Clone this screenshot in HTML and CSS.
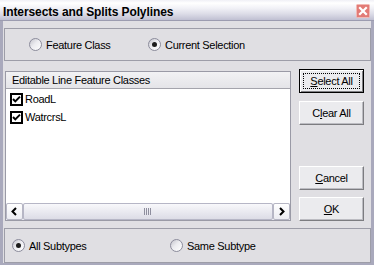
FILE: index.html
```html
<!DOCTYPE html>
<html>
<head>
<meta charset="utf-8">
<title>Intersects and Splits Polylines</title>
<link rel="stylesheet" href="styles.css">
</head>
<body>
<div class="window">
  <div class="titlebar">
    <span class="title">Intersects and Splits Polylines</span>
    <span class="close">
      <svg width="14" height="14" viewBox="0 0 14 14">
        <rect x="0.5" y="0.5" width="13" height="13" rx="1" fill="#e27b76" stroke="#f2b9b5"/>
        <path d="M4 4 L10 10 M10 4 L4 10" stroke="#fff" stroke-width="2.2" stroke-linecap="square"/>
      </svg>
    </span>
  </div>
  <div class="client">
    <div class="group group-top">
      <label class="opt"><span class="radio"></span>Feature Class</label>
      <label class="opt"><span class="radio on"></span>Current Selection</label>
    </div>
    <div class="middle">
      <div class="list">
        <div class="list-header">Editable Line Feature Classes</div>
        <div class="list-body">
          <div class="item">
            <span class="check"><svg width="9" height="9" viewBox="0 0 9 9"><path d="M1 4 L3.3 6.4 L8 1.6" fill="none" stroke="#000" stroke-width="2"/></svg></span>
            <span>RoadL</span>
          </div>
          <div class="item">
            <span class="check"><svg width="9" height="9" viewBox="0 0 9 9"><path d="M1 4 L3.3 6.4 L8 1.6" fill="none" stroke="#000" stroke-width="2"/></svg></span>
            <span>WatrcrsL</span>
          </div>
        </div>
        <div class="hscroll">
          <span class="sb-btn"><svg width="9" height="9" viewBox="0 0 9 9"><path d="M6 1 L2.5 4.5 L6 8" fill="none" stroke="#000" stroke-width="2"/></svg></span>
          <span class="sb-thumb"><span class="grip"></span></span>
          <span class="sb-btn"><svg width="9" height="9" viewBox="0 0 9 9"><path d="M3 1 L6.5 4.5 L3 8" fill="none" stroke="#000" stroke-width="2"/></svg></span>
        </div>
      </div>
      <div class="buttons">
        <button class="btn btn-default"><u>S</u>elect All</button>
        <button class="btn btn-gap">C<u>l</u>ear All</button>
        <span class="spacer"></span>
        <button class="btn"><u>C</u>ancel</button>
        <button class="btn btn-gap2"><u>O</u>K</button>
      </div>
    </div>
    <div class="group group-bottom">
      <label class="opt"><span class="radio on"></span>All Subtypes</label>
      <label class="opt"><span class="radio"></span>Same Subtype</label>
    </div>
  </div>
</div>
</body>
</html>
```

FILE: styles.css
```css
html, body {
  margin: 0;
  padding: 0;
  background: #e0dfe3;
}

.window {
  width: 374px;
  height: 265px;
  display: flex;
  flex-direction: column;
  font-family: "Liberation Sans", Arial, sans-serif;
  font-size: 11px;
  letter-spacing: -0.3px;
  color: #000;
  overflow: hidden;
}

.titlebar {
  height: 20px;
  flex: none;
  border-bottom: 1px solid #9c9cb0;
  display: flex;
  align-items: center;
  justify-content: space-between;
  padding: 0 4px 0 3px;
  background: linear-gradient(#f0f0f6 0, #ffffff 15%, #f2f2f7 40%, #dcdce7 70%, #c0c0d2 100%);
}

.title {
  font-weight: bold;
  font-size: 12px;
  letter-spacing: -0.1px;
  padding-top: 3px;
}

.close {
  display: flex;
  width: 14px;
  height: 14px;
  margin-top: 2px;
}

.client {
  flex: 1;
  background: #e0dfe3;
  border-style: solid;
  border-color: #a9a9bc;
  border-width: 0 3px 2px 3px;
  padding-top: 7px;
  display: flex;
  flex-direction: column;
}

.group {
  margin-left: 1px;
  width: 367px;
  box-sizing: border-box;
  border: 1px solid #9d9da8;
  display: flex;
  align-items: center;
  flex: none;
}

.group-top {
  height: 33px;
  padding-left: 24px;
}

.group-bottom {
  height: 35px;
  margin-top: 7px;
  padding-left: 7px;
}

.opt {
  display: flex;
  align-items: center;
  gap: 4px;
}

.group-top .opt:first-child {
  width: 119px;
}

.group-bottom .opt:first-child {
  width: 158px;
}

.radio {
  flex: none;
  width: 13px;
  height: 13px;
  box-sizing: border-box;
  border-radius: 50%;
  border: 1px solid #8c8c9c;
  background: linear-gradient(135deg, #c4c4cc 0, #ececf0 45%, #ffffff 100%);
  position: relative;
}

.radio.on::after {
  content: "";
  position: absolute;
  left: 3px;
  top: 3px;
  width: 5px;
  height: 5px;
  border-radius: 50%;
  background: #1c1c1c;
}

.middle {
  display: flex;
  height: 152px;
  margin-top: 8px;
  padding-left: 2px;
  flex: none;
}

.list {
  width: 286px;
  height: 150px;
  margin-top: 2px;
  box-sizing: border-box;
  border: 1px solid #9a9aa6;
  background: #fff;
  display: flex;
  flex-direction: column;
}

.list-header {
  height: 16px;
  line-height: 16px;
  padding-left: 6px;
  background: linear-gradient(#f2f2f4, #e4e4e8);
  border-bottom: 1px solid #a4a4ac;
  flex: none;
}

.list-body {
  flex: 1;
  padding-top: 1px;
}

.item {
  height: 18px;
  display: flex;
  align-items: center;
  padding-left: 4px;
  gap: 2px;
}

.check {
  width: 13px;
  height: 13px;
  box-sizing: border-box;
  border: 2px solid #000;
  background: #fff;
  display: flex;
  align-items: center;
  justify-content: center;
}

.check svg {
  display: block;
}

.hscroll {
  height: 17px;
  display: flex;
  background: #eeeef3;
  flex: none;
}

.sb-btn {
  width: 17px;
  height: 17px;
  box-sizing: border-box;
  border: 1px solid #b6b6c4;
  border-radius: 2px;
  background: linear-gradient(#ffffff, #ececf2);
  display: flex;
  align-items: center;
  justify-content: center;
  flex: none;
}

.sb-thumb {
  flex: 1;
  box-sizing: border-box;
  border: 1px solid #b6b6c6;
  border-radius: 2px;
  background: linear-gradient(#f8f8fb, #dcdce6);
  display: flex;
  align-items: center;
  justify-content: center;
}

.grip {
  width: 8px;
  height: 7px;
  background: repeating-linear-gradient(90deg, #8e8e9e 0 1px, transparent 1px 2px);
}

.buttons {
  display: flex;
  flex-direction: column;
  width: 65px;
  margin-left: 8px;
}

.btn {
  width: 65px;
  height: 24px;
  box-sizing: border-box;
  padding: 0;
  margin: 0;
  font: inherit;
  letter-spacing: inherit;
  color: #000;
  background: #ebebee;
  border: 1px solid;
  border-color: #ffffff #7c7c80 #7c7c80 #ffffff;
  box-shadow: inset -1px -1px 0 #bcbcc2;
  display: flex;
  align-items: center;
  justify-content: center;
  position: relative;
  flex: none;
}

.btn-default {
  border-color: #000;
  box-shadow: inset 1px 1px 0 #fff, inset -1px -1px 0 #808084;
}

.btn-default::after {
  content: "";
  position: absolute;
  left: 3px;
  top: 3px;
  right: 3px;
  bottom: 3px;
  border: 1px dotted #000;
}

.btn-gap {
  margin-top: 8px;
}

.btn-gap2 {
  margin-top: 7px;
}

.spacer {
  flex: 1;
}
```
